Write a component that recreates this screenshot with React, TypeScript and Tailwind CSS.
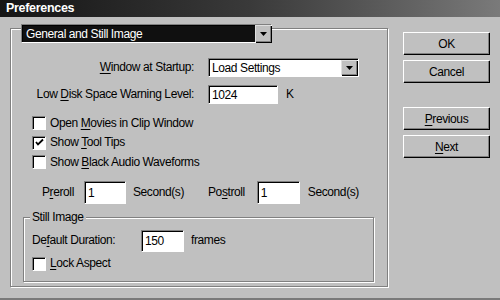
import React from 'react'

const sunken = 'bg-white border-t border-l border-[#808080] shadow-[inset_1px_1px_0_#000,1px_1px_0_#fff]'

function U({ children }: { children: React.ReactNode }) {
  return <span className="underline underline-offset-[2px]">{children}</span>
}

function ArrowButton() {
  return (
    <div className="w-[16px] h-full bg-[#c0c0c0] border-t border-l border-[#dfdfdf] shadow-[inset_-1px_-1px_0_#808080,1px_1px_0_#000] flex items-center justify-center">
      <svg width="7" height="4" viewBox="0 0 7 4">
        <polygon points="0,0 7,0 3.5,4" fill="#000" />
      </svg>
    </div>
  )
}

function Checkbox({ checked, children }: { checked?: boolean; children: React.ReactNode }) {
  return (
    <div className="flex items-center h-[19.5px]">
      <div className={`w-[13px] h-[13px] ${sunken} flex items-center justify-center`}>
        {checked && (
          <svg width="9" height="9" viewBox="0 0 9 9">
            <path d="M1 4 L3 6.5 L8 1.5" stroke="#000" strokeWidth="1.8" fill="none" />
          </svg>
        )}
      </div>
      <span className="ml-[5px]">{children}</span>
    </div>
  )
}

function Button({ children, className = '' }: { children: React.ReactNode; className?: string }) {
  return (
    <div
      className={`w-[86px] h-[22px] bg-[#c0c0c0] border-t border-l border-white shadow-[inset_-1px_-1px_0_#808080,1px_1px_0_#000] flex items-center justify-center ${className}`}
    >
      {children}
    </div>
  )
}

export default function App() {
  return (
    <div
      className="w-[500px] h-[300px] bg-[#c0c0c0] flex flex-col text-[12px] tracking-[-0.4px] text-black overflow-hidden border-b-2 border-[#7a7a7a]"
      style={{ fontFamily: '"Liberation Sans", Arial, sans-serif' }}
    >
      {/* Title bar */}
      <div className="h-[17px] bg-gradient-to-r from-[#151515] via-[#3a3a3a] to-[#7a7a7a] text-white font-bold text-[12.5px] tracking-[-0.3px] pl-[6px] flex items-center shrink-0">
        Preferences
      </div>

      <div className="flex flex-1">
        {/* Main group box */}
        <div className="ml-[10px] mt-[11px] w-[378px] h-[259px] border border-[#808080] shadow-[inset_1px_1px_0_#fff,1px_1px_0_#fff] shrink-0">
          {/* Panel select */}
          <div className="-mt-[5px] ml-[10px] w-[250px] h-[18px] flex bg-[#c0c0c0] border-t border-l border-[#808080] shadow-[1px_1px_0_#fff]">
            <div className="flex-1 bg-[#101010] text-white pl-[3px] flex items-center border-t border-l border-black">
              General and Still Image
            </div>
            <ArrowButton />
          </div>

          {/* Window at Startup */}
          <div className="flex items-center mt-[16px] h-[18px]">
            <div className="w-[183px] text-right">
              <U>W</U>indow at Startup:
            </div>
            <div className={`ml-[14px] w-[150px] h-[18px] flex ${sunken}`}>
              <div className="flex-1 pl-[3px] flex items-center">Load Settings</div>
              <div className="py-[1px] pr-[1px] h-full">
                <ArrowButton />
              </div>
            </div>
          </div>

          {/* Low disk */}
          <div className="flex items-center mt-[9px] h-[18px]">
            <div className="w-[183px] text-right">
              Low <U>D</U>isk Space Warning Level:
            </div>
            <div className={`ml-[14px] w-[69px] h-[18px] pl-[3px] flex items-center ${sunken}`}>1024</div>
            <span className="ml-[9px]">K</span>
          </div>

          {/* Checkboxes */}
          <div className="ml-[21px] mt-[10px] flex flex-col">
            <Checkbox>
              Open <U>M</U>ovies in Clip Window
            </Checkbox>
            <Checkbox checked>
              Show <U>T</U>ool Tips
            </Checkbox>
            <Checkbox>
              Show <U>B</U>lack Audio Waveforms
            </Checkbox>
          </div>

          {/* Preroll / Postroll */}
          <div className="flex items-center mt-[9px] h-[22px] ml-[31px]">
            <span>
              P<U>r</U>eroll
            </span>
            <div className={`ml-[10px] w-[41px] h-[22px] pl-[3px] flex items-start pt-[2px] ${sunken}`}>1</div>
            <span className="ml-[8px]">Second(s)</span>
            <span className="ml-[24px]">
              Po<U>s</U>troll
            </span>
            <div className={`ml-[12px] w-[42px] h-[22px] pl-[3px] flex items-start pt-[2px] ${sunken}`}>1</div>
            <span className="ml-[9px]">Second(s)</span>
          </div>

          {/* Still Image group */}
          <div className="ml-[12px] mt-[14px] w-[351px] h-[65px] border border-[#808080] shadow-[inset_1px_1px_0_#fff,1px_1px_0_#fff] px-[8px]">
            <div className="-mt-[8px] -ml-[2px] px-[2px] bg-[#c0c0c0] w-fit leading-[14px]">Still Image</div>
            <div className="flex items-center mt-[6px] h-[21px]">
              <span className="w-[109px]">
                De<U>f</U>ault Duration:
              </span>
              <div className={`w-[42px] h-[21px] pl-[3px] flex items-center ${sunken}`}>150</div>
              <span className="ml-[8px]">frames</span>
            </div>
            <div className="mt-[3px]">
              <Checkbox>
                <U>L</U>ock Aspect
              </Checkbox>
            </div>
          </div>
        </div>

        {/* Buttons */}
        <div className="ml-[15px] mt-[15px] flex flex-col">
          <Button>OK</Button>
          <Button className="mt-[6px]">Cancel</Button>
          <Button className="mt-[25px]">
            <span>
              <U>P</U>revious
            </span>
          </Button>
          <Button className="mt-[6px]">
            <span>
              <U>N</U>ext
            </span>
          </Button>
        </div>
      </div>
    </div>
  )
}
